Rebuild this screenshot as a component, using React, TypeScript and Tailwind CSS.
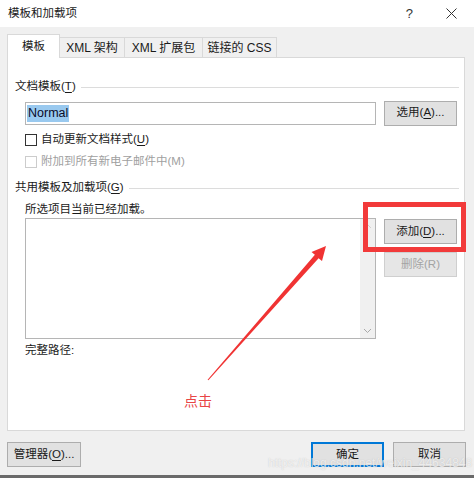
import React from "react";

const font = { fontFamily: '"Liberation Sans", "Noto Sans CJK SC", sans-serif' };

function Btn({ children, w = 73, disabled = false, primary = false }: { children: React.ReactNode; w?: number; disabled?: boolean; primary?: boolean }) {
  const cls = disabled
    ? "bg-[#e6e6e6] border border-[#cfcfcf] text-[#a3a3a3]"
    : primary
    ? "bg-[#e1e1e1] border-2 border-[#0078d7] text-[#1a1a1a]"
    : "bg-[#e1e1e1] border border-[#adadad] text-[#1a1a1a]";
  return (
    <div className={`h-[25px] flex items-center justify-center text-[11.5px] ${cls}`} style={{ width: w }}>
      {children}
    </div>
  );
}

function U({ c }: { c: string }) {
  return <span className="underline underline-offset-2">{c}</span>;
}

export default function App() {
  return (
    <div className="w-[474px] h-[478px] bg-[#f0f0f0] relative overflow-hidden flex flex-col text-[#1a1a1a]" style={font}>
      {/* title bar */}
      <div className="h-[27px] bg-white flex items-center justify-between pl-[8px] pr-[17px] text-[11.5px] shrink-0">
        <span>模板和加载项</span>
        <div className="flex items-center gap-[33px]">
          <span className="text-[13px] text-[#333]">?</span>
          <svg width="11" height="11" viewBox="0 0 11 11">
            <path d="M0.5 0.5 L10.5 10.5 M10.5 0.5 L0.5 10.5" stroke="#333" strokeWidth="1" />
          </svg>
        </div>
      </div>

      {/* tabs */}
      <div className="flex items-end pl-[7px] mt-[7px] h-[23px] relative z-10 shrink-0">
        <div className="w-[53px] h-[24px] bg-white border border-[#d9d9d9] border-b-0 flex items-center justify-center text-[11.5px] -mb-px">模板</div>
        <div className="w-[65px] h-[20px] border border-[#d9d9d9] border-l-0 border-b-0 bg-[#f0f0f0] flex items-center justify-center text-[12px]">XML 架构</div>
        <div className="w-[78px] h-[20px] border border-[#d9d9d9] border-l-0 border-b-0 bg-[#f0f0f0] flex items-center justify-center text-[12px]">XML 扩展包</div>
        <div className="w-[74px] h-[20px] border border-[#d9d9d9] border-l-0 border-b-0 bg-[#f0f0f0] flex items-center justify-center text-[12px]">链接的 CSS</div>
      </div>

      {/* panel */}
      <div className="ml-[7px] w-[458px] h-[374px] bg-white border border-[#d9d9d9] shrink-0 flex flex-col pl-[7px] text-[11.5px]">
        <div className="mt-[21px] h-[16px] flex items-center pr-[5px]">
          <span>文档模板(<U c="T" />)</span>
          <div className="flex-1 h-px bg-[#dcdcdc] ml-[5px]" />
        </div>
        <div className="mt-[6px] ml-[10px] h-[24px] flex items-center gap-[8px]">
          <div className="w-[351px] h-[23px] border border-[#b5b5b5] flex items-center pl-[1px]">
            <span className="bg-[#99c9ef] text-[#0a0a28] text-[12.5px] leading-[17px] px-[1px]">Normal</span>
          </div>
          <Btn>选用(<U c="A" />)...</Btn>
        </div>
        <div className="mt-[7px] ml-[10px] h-[16px] flex items-center">
          <div className="w-[12px] h-[12px] border border-[#333] bg-white" />
          <span className="ml-[4px]">自动更新文档样式(<U c="U" />)</span>
        </div>
        <div className="mt-[6px] ml-[10px] h-[16px] flex items-center text-[#a0a0a0]">
          <div className="w-[12px] h-[12px] border border-[#cccccc] bg-white" />
          <span className="ml-[4px]">附加到所有新电子邮件中(M)</span>
        </div>
        <div className="mt-[10px] h-[16px] flex items-center pr-[5px]">
          <span>共用模板及加载项(<U c="G" />)</span>
          <div className="flex-1 h-px bg-[#dcdcdc] ml-[5px]" />
        </div>
        <div className="mt-[7px] ml-[10px] h-[14px] flex items-center">所选项目当前已经加载。</div>
        <div className="mt-[1px] ml-[10px] flex items-start gap-[8px]">
          <div className="w-[351px] h-[121px] border border-[#b5b5b5] flex justify-end">
            <div className="w-[15px] h-full bg-[#f0f0f0] flex flex-col justify-between items-center py-[4px]">
              <svg width="9" height="6" viewBox="0 0 9 6">
                <path d="M1 5 L4.5 1.5 L8 5" stroke="#d0d0d0" strokeWidth="1" fill="none" />
              </svg>
              <svg width="9" height="6" viewBox="0 0 9 6">
                <path d="M1 1 L4.5 4.5 L8 1" stroke="#a8a8a8" strokeWidth="1" fill="none" />
              </svg>
            </div>
          </div>
          <div className="flex flex-col gap-[8px] mt-[1px]">
            <Btn>添加(<U c="D" />)...</Btn>
            <Btn disabled>删除(R)</Btn>
          </div>
        </div>
        <div className="mt-[4px] ml-[10px] h-[16px] flex items-center">完整路径:</div>
      </div>

      {/* footer */}
      <div className="flex items-start mt-[11px] pl-[7px] pr-[8px]">
        <Btn w={74}>管理器(<U c="O" />)...</Btn>
        <div className="flex-1" />
        <Btn primary>确定</Btn>
        <div className="w-[9px]" />
        <Btn>取消</Btn>
      </div>
      <div className="absolute left-0 right-0 bottom-0 h-[3px] bg-[#6a6a6a]" />

      {/* watermark */}
      <div className="absolute left-[268px] top-[454px] text-[12px] text-white/70 whitespace-nowrap pointer-events-none" style={{ textShadow: "0 0 1px rgba(150,150,150,0.5)" }}>
        https://blog.csdn.net/weixin_44634848
      </div>

      {/* annotations */}
      <div className="absolute left-[363px] top-[202px] w-[103px] h-[50px] border-[5px] border-[#f23a3a] pointer-events-none" />
      <svg className="absolute left-0 top-0 pointer-events-none" width="474" height="478" viewBox="0 0 474 478">
        <polygon
          points="208.4,380.3 318.6,258.2 322.0,261.1 326,246 311.5,251.9 314.9,254.8 207.6,379.7"
          fill="#f03333"
        />
      </svg>
      <div className="absolute left-[184px] top-[390px] text-[14px] text-[#e84545]" style={{ fontFamily: '"Noto Sans CJK SC", sans-serif' }}>
        点击
      </div>
    </div>
  );
}
